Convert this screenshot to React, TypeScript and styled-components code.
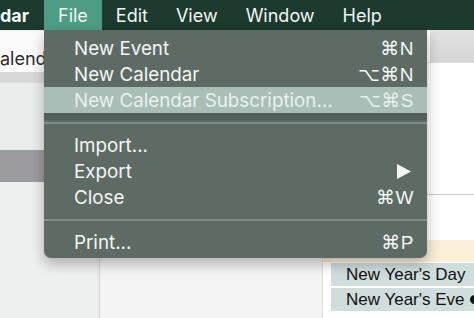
import styled, { createGlobalStyle } from 'styled-components';

const GlobalStyle = createGlobalStyle`
  html, body {
    margin: 0;
    padding: 0;
    background: #ffffff;
  }
  body {
    font-family: Inter, 'Liberation Sans', 'DejaVu Sans', sans-serif;
  }
`;

const Screen = styled.div`
  position: relative;
  width: 474px;
  height: 318px;
  overflow: hidden;
  background: #ffffff;
`;

const MenuBar = styled.div`
  display: flex;
  align-items: stretch;
  height: 30px;
  background: #1c3a2e;
  color: #f3f6f4;
  font-size: 18px;
`;

const AppName = styled.div`
  display: flex;
  align-items: center;
  width: 44px;
  font-weight: 700;
`;

const BarItem = styled.div<{ $active?: boolean }>`
  display: flex;
  align-items: center;
  padding: 0 14px;
  background: ${(p) => (p.$active ? '#4f9c84' : 'transparent')};
`;

const Content = styled.div`
  display: grid;
  grid-template-columns: 100px 222px 152px;
  height: 288px;
`;

const Sidebar = styled.div`
  display: flex;
  flex-direction: column;
  background: #edf0ef;
`;

const SearchField = styled.div`
  display: flex;
  align-items: flex-end;
  height: 41px;
  margin-top: 1px;
  padding-bottom: 3px;
  box-sizing: border-box;
  background: #fbfbfb;
  color: #2c2c2c;
  font-size: 18px;
  white-space: nowrap;
  overflow: hidden;
`;

const SidebarStrip = styled.div`
  height: 11px;
  background: #d7d9d8;
`;

const SidebarList = styled.div`
  height: 67px;
  background: #e9eeed;
`;

const SidebarRow = styled.div<{ $selected?: boolean }>`
  height: 32px;
  background: ${(p) => (p.$selected ? '#9c9ba0' : 'transparent')};
`;

const MainColumn = styled.div`
  background: #f4f4f4;
  border-left: 1px solid #d3d3d3;
  margin-left: -1px;
`;

const RightColumn = styled.div`
  display: flex;
  flex-direction: column;
  background: #ffffff;
  border-left: 1px solid #dedede;
`;

const Toolbar = styled.div`
  display: flex;
  height: 32px;
  border-bottom: 1px solid #dadada;
`;

const ToolbarGap = styled.div`
  width: 107px;
`;

const ToolbarButton = styled.div`
  flex: 1;
  background: linear-gradient(#e4e3e4, #d5d5d6);
`;

const DayCell = styled.div`
  height: 131px;
  border-bottom: 1px solid #cacaca;
`;

const CellGap = styled.div`
  height: 45px;
`;

const AllDayStrip = styled.div`
  height: 22px;
  background: #fcefd8;
`;

const EventList = styled.div`
  display: flex;
  flex-direction: column;
  gap: 2px;
  padding: 1px 0 0 8px;
`;

const EventRow = styled.div`
  display: flex;
  align-items: center;
  gap: 5px;
  height: 23px;
  padding-left: 15px;
  background: #cfdddc;
  color: #111111;
  font-family: 'Liberation Sans', Arial, sans-serif;
  font-size: 17px;
  white-space: nowrap;
  overflow: hidden;
`;

const EventDot = styled.span`
  flex: none;
  width: 9px;
  height: 9px;
  border-radius: 50%;
  background: #111111;
`;

const Dropdown = styled.div`
  position: absolute;
  left: 44px;
  top: 30px;
  width: 383px;
  padding: 5px 0 3px;
  box-sizing: border-box;
  background: #5e6b65;
  border-radius: 0 0 7px 7px;
  box-shadow: 0 6px 14px rgba(0, 0, 0, 0.28);
  color: #f3f6f5;
  font-size: 18.8px;
`;

const MenuRow = styled.div<{ $highlight?: boolean }>`
  display: flex;
  align-items: center;
  justify-content: space-between;
  height: 26px;
  padding: 0 13px 0 30px;
  background: ${(p) => (p.$highlight ? '#a8beb6' : 'transparent')};
  color: ${(p) => (p.$highlight ? '#e9f1ee' : '#f3f6f5')};
`;

const Shortcut = styled.span`
  font-family: 'Liberation Sans', 'DejaVu Sans', sans-serif;
  font-size: 19px;
  letter-spacing: 0.5px;
`;

const Separator = styled.div<{ $band?: boolean }>`
  height: 19px;
  display: flex;
  flex-direction: column;
  justify-content: center;
  background: ${(p) =>
    p.$band ? 'linear-gradient(#525e59 0, #525e59 7px, transparent 7px)' : 'transparent'};

  &::after {
    content: '';
    display: block;
    height: 2px;
    background: #7f8c86;
  }
`;

const SubmenuArrow = () => (
  <svg width="14" height="15" viewBox="0 0 14 15" style={{ marginRight: 3 }}>
    <polygon points="0,0 14,7.5 0,15" fill="#f3f6f5" />
  </svg>
);

type Item = { label: string; keys?: string; submenu?: boolean; highlight?: boolean };

const groups: Item[][] = [
  [
    { label: 'New Event', keys: '⌘N' },
    { label: 'New Calendar', keys: '⌥⌘N' },
    { label: 'New Calendar Subscription...', keys: '⌥⌘S', highlight: true },
  ],
  [
    { label: 'Import...' },
    { label: 'Export', submenu: true },
    { label: 'Close', keys: '⌘W' },
  ],
  [{ label: 'Print...', keys: '⌘P' }],
];

const App: React.FC = () => {
  return (
    <>
      <GlobalStyle />
      <Screen>
        <MenuBar>
          <AppName>dar</AppName>
          <BarItem $active>File</BarItem>
          <BarItem>Edit</BarItem>
          <BarItem>View</BarItem>
          <BarItem>Window</BarItem>
          <BarItem>Help</BarItem>
        </MenuBar>
        <Content>
          <Sidebar>
            <SearchField>alendar</SearchField>
            <SidebarStrip />
            <SidebarList />
            <SidebarRow $selected />
            <SidebarRow />
          </Sidebar>
          <MainColumn />
          <RightColumn>
            <Toolbar>
              <ToolbarGap />
              <ToolbarButton />
            </Toolbar>
            <DayCell />
            <CellGap />
            <AllDayStrip />
            <EventList>
              <EventRow>New Year's Day</EventRow>
              <EventRow>
                New Year's Eve
                <EventDot />
              </EventRow>
            </EventList>
          </RightColumn>
        </Content>
        <Dropdown>
          {groups.map((group, gi) => (
            <div key={gi}>
              {gi > 0 && <Separator $band={gi === 1} />}
              {group.map((item) => (
                <MenuRow key={item.label} $highlight={item.highlight}>
                  <span>{item.label}</span>
                  {item.keys && <Shortcut>{item.keys}</Shortcut>}
                  {item.submenu && <SubmenuArrow />}
                </MenuRow>
              ))}
            </div>
          ))}
        </Dropdown>
      </Screen>
    </>
  );
};

export default App;
